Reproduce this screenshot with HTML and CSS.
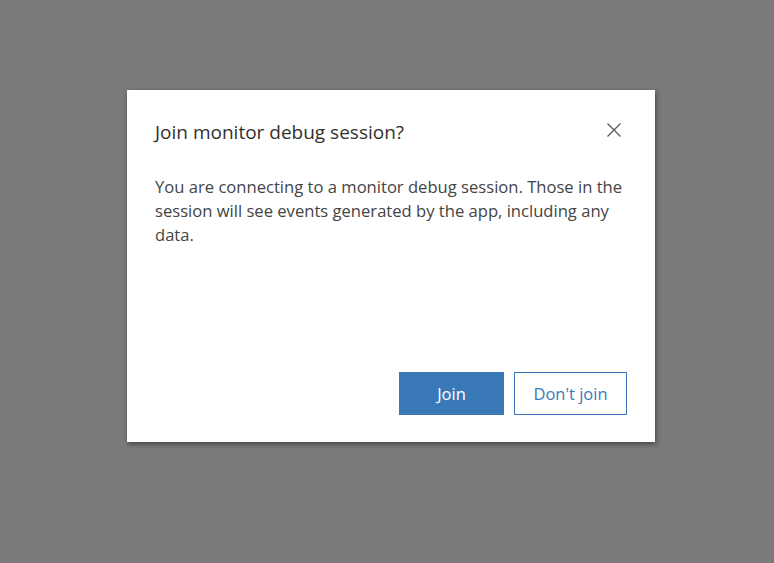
FILE: index.html
```html
<!DOCTYPE html>
<html>
<head>
<meta charset="utf-8">
<link rel="stylesheet" href="styles.css">
</head>
<body>
<div class="overlay">
  <div class="dialog" role="dialog">
    <div class="header">
      <h1 class="title">Join monitor debug session?</h1>
      <button class="close" aria-label="Close">
        <svg width="14" height="14" viewBox="0 0 14 14"><path d="M0.5 0.5 L13.5 13.5 M13.5 0.5 L0.5 13.5" stroke="#555" stroke-width="1.2" fill="none"/></svg>
      </button>
    </div>
    <p class="message">You are connecting to a monitor debug session. Those in the session will see events generated by the app, including any data.</p>
    <div class="footer">
      <button class="btn primary">Join</button>
      <button class="btn secondary">Don't join</button>
    </div>
  </div>
</div>
</body>
</html>
```
FILE: styles.css
```css
html, body {
  margin: 0;
  padding: 0;
  height: 100%;
}
body {
  background: #7a7a7a;
  font-family: "Open Sans", "Noto Sans", sans-serif;
}
.overlay {
  padding: 90px 0 0 127px;
}
.dialog {
  box-sizing: border-box;
  width: 528px;
  height: 352px;
  background: #ffffff;
  box-shadow: 1px 2px 5px rgba(0, 0, 0, 0.45);
  padding: 28px 28px 27px 28px;
  display: flex;
  flex-direction: column;
}
.header {
  display: flex;
  justify-content: space-between;
  align-items: flex-start;
}
.title {
  margin: 0;
  font-size: 19px;
  font-weight: 400;
  line-height: 28px;
  color: #323130;
}
.close {
  border: none;
  background: none;
  padding: 0;
  margin: 5px 6px 0 0;
  width: 14px;
  height: 14px;
  display: flex;
}
.message {
  margin: 29px 0 0 0;
  font-size: 16.6px;
  line-height: 24px;
  color: #444444;
}
.footer {
  margin-top: auto;
  display: flex;
  justify-content: flex-end;
  gap: 10px;
  padding-right: 0;
}
.btn {
  box-sizing: border-box;
  height: 43px;
  font-family: "Open Sans", "Noto Sans", sans-serif;
  font-size: 16.5px;
  padding: 0;
  cursor: pointer;
}
.primary {
  width: 105px;
  background: #3a79b8;
  color: #ffffff;
  border: none;
}
.secondary {
  width: 113px;
  background: #ffffff;
  color: #3a79b8;
  border: 1px solid #3a79b8;
}
```
